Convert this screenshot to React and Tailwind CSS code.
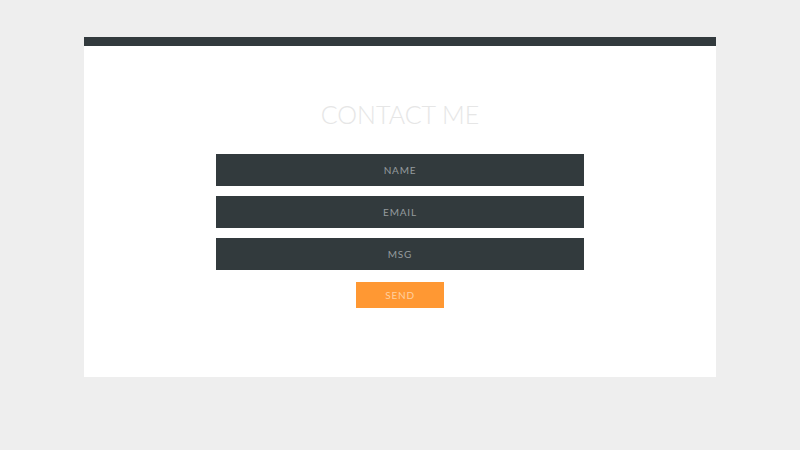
import React from 'react';

const FIELDS = ['NAME', 'EMAIL', 'MSG'];

const App = () => {
  return (
    <div className="w-[800px] h-[450px] bg-[#eeeeee] pt-[37px] font-['Lato','Liberation_Sans',sans-serif]">
      <div className="mx-auto w-[632px] h-[340px] bg-white">
        <div className="h-[9px] bg-[#323a3d]" />
        <div className="flex flex-col items-center pt-[56px]">
          <h1 className="text-[25px] leading-none font-light text-[#e6e6e6]">CONTACT ME</h1>
          <form className="mt-[27px] flex flex-col items-center gap-[10px]" onSubmit={(e) => e.preventDefault()}>
            {FIELDS.map((f) => (
              <input
                key={f}
                placeholder={f}
                className="w-[368px] h-[32px] bg-[#323a3d] text-center text-[10px] tracking-[0.8px] text-[#aab0b2] placeholder:text-[#959b9d] outline-none"
              />
            ))}
            <button
              type="submit"
              className="mt-[2px] w-[88px] h-[26px] bg-[#ff9833] text-[10px] tracking-[0.8px] text-[#ffd0a0]"
            >
              SEND
            </button>
          </form>
        </div>
      </div>
    </div>
  );
};

export default App;
